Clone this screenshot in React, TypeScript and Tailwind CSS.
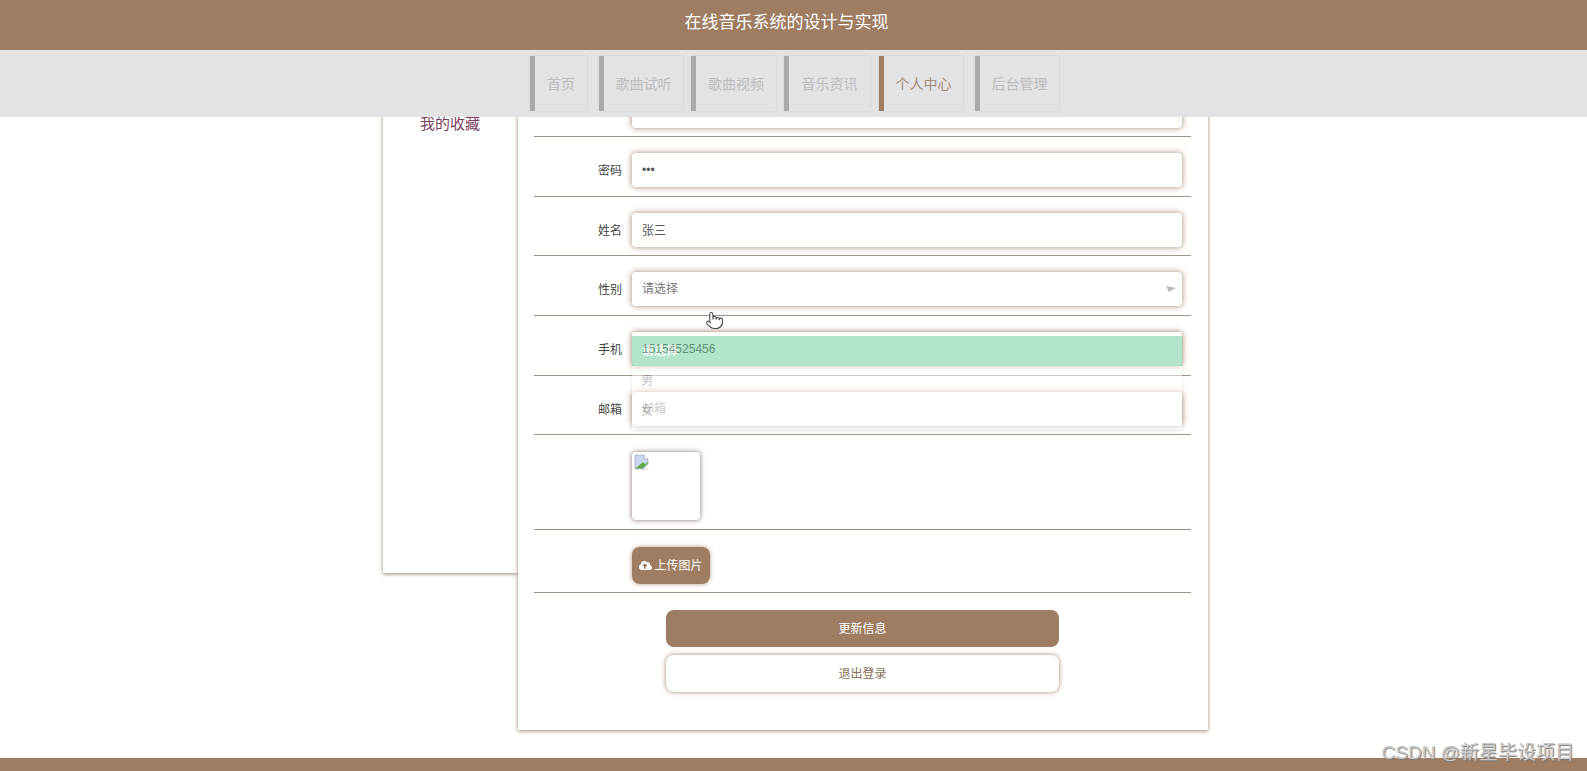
import { Pointer } from "lucide-react";
import { FaCloudUploadAlt } from "react-icons/fa";

const NAV = [
  { label: "首页", cls: "w-[57px] mr-3" },
  { label: "歌曲试听", cls: "w-[84px] mr-2" },
  { label: "歌曲视频", cls: "w-[85px] mr-2" },
  { label: "音乐资讯", cls: "w-[86px] mr-[9px]" },
  { label: "个人中心", cls: "w-[84px] mr-3", active: true },
  { label: "后台管理", cls: "w-[84px]" },
];

const FIELDS = [
  { label: "账号", value: "15154525456" },
  { label: "密码", value: "123", type: "password" },
  { label: "姓名", value: "张三" },
];

const inputCls =
  "w-[550px] h-[34px] rounded bg-white px-[10px] text-xs text-[#555] outline-none shadow-[0_0_6px_rgba(158,125,98,0.95)]";

function Row({ label, children }: { label?: string; children: React.ReactNode }) {
  return (
    <div className="flex h-[59.6px] items-start border-b border-[#a39484] pt-4">
      <label className="w-[88px] h-[34px] pt-px leading-[34px] text-right text-xs text-[#444]">{label}</label>
      <div className="relative ml-[10px]">{children}</div>
    </div>
  );
}

export default function App() {
  return (
    <div className="relative h-[771px] overflow-hidden bg-white font-['Liberation_Sans','Noto_Sans_CJK_SC',sans-serif]">
      {/* fixed top bars */}
      <div className="absolute inset-x-0 top-0 z-20">
        <div className="h-[50px] bg-[#9e7d62] pr-[14px] text-center text-[17px] leading-[45px] text-white shadow-[0_1px_3px_rgba(0,0,0,0.35)]">
          在线音乐系统的设计与实现
        </div>
        <div className="flex h-[67px] justify-center bg-[#e3e2e5] pl-[2px] pt-[6px]">
          {NAV.map((item) => (
            <div
              key={item.label}
              className={`${item.cls} h-[55px] border-l-[5px] text-center text-sm leading-[57px] shadow-[0_0_2px_rgba(0,0,0,0.1)] ${
                item.active ? "border-[#9e7d62] text-[#a08e7e]" : "border-[#aaaaaa] text-[#bdbdbd]"
              }`}
            >
              {item.label}
            </div>
          ))}
        </div>
      </div>

      {/* page content */}
      <div className="flex justify-center pl-[4px]">
        <aside className="h-[573px] w-[135px] shrink-0 bg-white pl-[37px] pt-[114px] text-[15px] leading-5 text-[#7b3f5f] shadow-[0_1px_4px_rgba(120,90,60,0.75)]">
          我的收藏
        </aside>
        <main className="relative h-[730px] w-[690px] shrink-0 bg-white pl-[16px] pr-[17px] pt-[77.6px] shadow-[0_1px_4px_rgba(120,90,60,0.75)]">
          {FIELDS.map((f) => (
            <Row key={f.label} label={f.label}>
              <input readOnly type={f.type ?? "text"} value={f.value} className={inputCls} />
            </Row>
          ))}

          <Row label="性别">
            <div className={`${inputCls} relative leading-[34px] text-[#777]`}>
              请选择
              <svg viewBox="0 0 10 6" className="absolute right-[6px] top-[14px] h-[6px] w-[10px]">
                <polygon points="0,0 10,2 3,6" fill="#bbbbbb" />
              </svg>
            </div>
            {/* select dropdown, caught mid fade */}
            <div className="absolute left-0 top-[60px] z-10 w-[550px] bg-white py-1 text-xs leading-[30px] text-[#888] opacity-50 shadow-[0_0_4px_rgba(0,0,0,0.15)]">
              <div className="h-[30px] bg-[#67cd99] px-[10px] font-medium text-white">请选择</div>
              <div className="h-[30px] px-[9px]">男</div>
              <div className="h-[30px] px-[9px]">女</div>
            </div>
          </Row>

          <Row label="手机">
            <input readOnly value="15154525456" className={inputCls} />
          </Row>
          <Row label="邮箱">
            <input readOnly placeholder="邮箱" className={`${inputCls} placeholder:text-[#999]`} />
          </Row>

          <div className="flex h-[95px] border-b border-[#9b8b7a] pl-[98px] pt-[17px]">
            <div className="h-[68px] w-[68px] rounded bg-white pl-[2px] pt-[2px] shadow-[0_0_5px_rgba(110,95,90,0.9)]">
              <svg viewBox="0 0 16 16" className="h-4 w-4">
                <path d="M1 1h9l4 4v10H1z" fill="#c9d7f2" stroke="#a9a9b5" strokeWidth="0.8" />
                <path d="M10 1v4h4" fill="#ffffff" stroke="#a9a9b5" strokeWidth="0.8" />
                <path d="M1.5 14.5 L9 8 L11 10 L14 8 V9 L9 14.5 Z" fill="#5fa84a" />
                <path d="M10 15 L15 10 V15 Z" fill="#ffffff" />
              </svg>
            </div>
          </div>

          <div className="flex h-[63px] border-b border-[#a39484] pl-[98px] pt-[17px]">
            <button className="flex h-[37px] w-[78px] items-center justify-center gap-[2px] rounded-lg bg-[#9e7d62] text-xs text-white shadow-[0_0_4px_rgba(158,125,98,0.8)]">
              <FaCloudUploadAlt className="h-[13px] w-[13px]" />
              上传图片
            </button>
          </div>

          <div className="ml-[132px] mt-[17px] flex w-[393px] flex-col gap-2">
            <button className="h-[37px] rounded-lg bg-[#9e7d62] text-xs text-white">更新信息</button>
            <button className="h-[37px] rounded-lg bg-white text-xs text-[#8a6f58] shadow-[0_0_5px_rgba(158,125,98,0.95)]">
              退出登录
            </button>
          </div>
        </main>
      </div>

      <footer className="mt-[28px] h-[13px] bg-[#9e7d62]" />

      {/* mouse cursor */}
      <Pointer className="absolute left-[705px] top-[310px] z-30 h-[21px] w-[19px] fill-white text-[#444]" strokeWidth={1.3} />

      {/* screenshot watermark */}
      <div className="absolute bottom-[6px] right-[13px] z-30 text-[19px] leading-6 text-[#c8c8c8] [text-shadow:1px_1px_1px_#777]">
        CSDN @新星毕设项目
      </div>
    </div>
  );
}
